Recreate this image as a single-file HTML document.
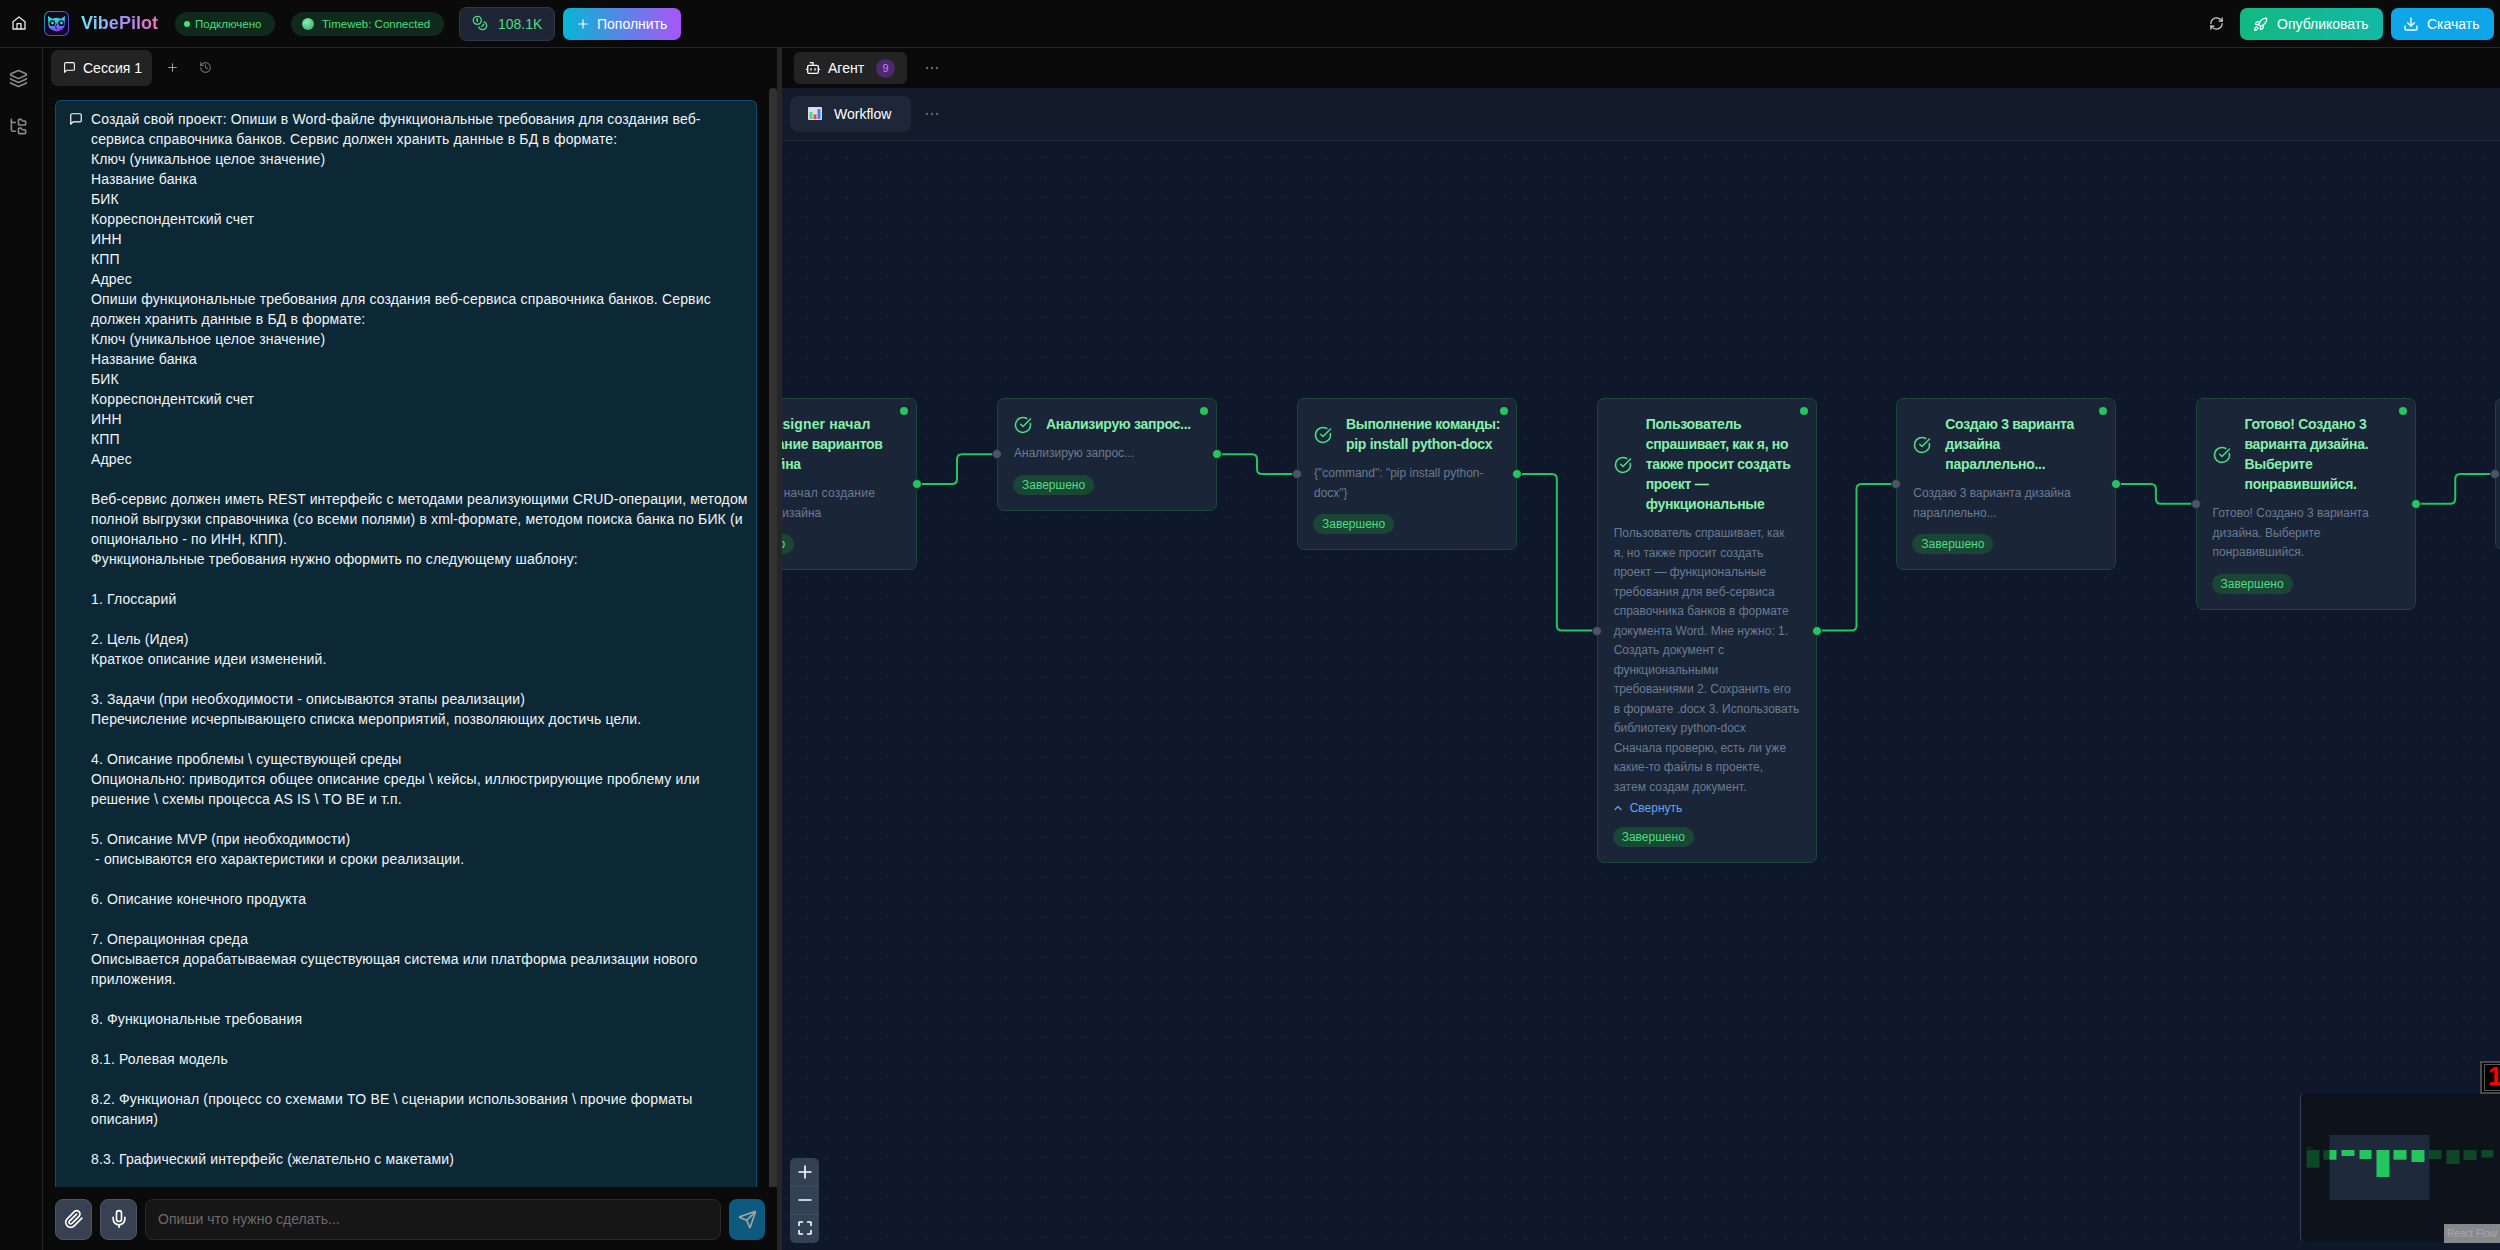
<!DOCTYPE html>
<html><head><meta charset="utf-8">
<style>
*{box-sizing:border-box;margin:0;padding:0}
html,body{width:2500px;height:1250px;overflow:hidden;background:#0a0a0a;font-family:"Liberation Sans",sans-serif;color:#e5e5e5}
.abs{position:absolute}
svg{display:block;overflow:visible}
#hdr{position:absolute;left:0;top:0;width:2500px;height:48px;background:#0a0a0a;border-bottom:1px solid #262626}
.pill{position:absolute;top:12px;height:24px;border-radius:12px;background:#0f2a1a;color:#4ade80;font-size:12px;line-height:24px;white-space:nowrap}
.txt{position:absolute;white-space:nowrap}
#side{position:absolute;left:0;top:48px;width:43px;height:1202px;border-right:1px solid #262626;background:#0a0a0a}
#chat{position:absolute;left:43px;top:48px;width:734px;height:1202px;background:#0a0a0a;overflow:hidden}
#divider{position:absolute;left:777px;top:48px;width:5px;height:1202px;background:#262626}
#right{position:absolute;left:782px;top:48px;width:1718px;height:1202px;background:#0a0a0a;overflow:hidden}
#wfhdr{position:absolute;left:0;top:40px;width:1718px;height:53px;background:#131a29;border-bottom:1px solid #1e293b}
#canvas{position:absolute;left:0;top:93px;width:1718px;height:1109px;background-color:#0f172a;overflow:hidden}
.msg{position:absolute;left:12px;top:52px;width:702px;height:1087px;background:#0c2835;border:1px solid #0f4c6c;border-bottom:none;border-radius:6px 6px 0 0;overflow:hidden}
.msgtxt{position:absolute;left:35px;top:8px;font-size:14px;line-height:20px;letter-spacing:0.15px;color:#f1f5f9;white-space:pre}
.ibtn{position:absolute;top:1151px;width:37px;height:41px;border-radius:8px;background:#374151;border:1px solid #4b5563}
</style></head>
<body>
<style>
.node{position:absolute;width:220px;border-radius:7px;border:1px solid #1a4638;background:rgba(30,41,59,0.78)}
.sdot{position:absolute;right:8px;top:8px;width:8px;height:8px;border-radius:4px;background:#22c55e}
.ntitle{position:absolute;left:48px;margin-top:-1px;font-size:14px;line-height:20px;font-weight:bold;letter-spacing:-0.3px;color:#86efac;white-space:nowrap}
.nsub{position:absolute;left:16px;margin-top:1px;font-size:12px;line-height:19.5px;color:#6b7b93;white-space:nowrap}
.ntog{position:absolute;left:32px;font-size:12px;line-height:16px;color:#60a5fa;white-space:nowrap}
.badge{position:absolute;left:15px;height:20px;padding:0 9px;border-radius:10px;background:#1a4636;color:#4ade80;font-size:12px;line-height:20px;white-space:nowrap}
.hdl{position:absolute;width:10px;height:10px;border-radius:5px;border:1px solid #1e293b}
.hdl.src{background:#22c55e}
.hdl.tgt{background:#4b5563}
</style>
<div id="hdr">
  <svg class="abs" style="left:11px;top:15px" width="16" height="16" viewBox="0 0 24 24" fill="none" stroke="#e5e5e5" stroke-width="2" stroke-linejoin="round" stroke-linecap="round"><path d="M3 10 12 3l9 7v11H3z"/><path d="M9 21v-8h6v8"/></svg>
  <div class="abs" style="left:44px;top:11px;width:25px;height:25px;border-radius:6px;background:linear-gradient(135deg,#1fa89a,#3b5fb0 55%,#7c3aed)"></div>
  <div class="abs" style="left:45px;top:12px;width:23px;height:23px;border-radius:5px;background:#110826"></div>
  <svg class="abs" style="left:47px;top:15px" width="19" height="19" viewBox="0 0 20 20">
    <defs><linearGradient id="owl" x1="0" y1="0" x2="0.3" y2="1"><stop offset="0" stop-color="#22f0c0"/><stop offset="0.5" stop-color="#38bdd8"/><stop offset="1" stop-color="#8b3cf7"/></linearGradient></defs>
    <path d="M1,1 L5.5,4 Q10,2 14.5,4 L19,1 L18.6,9 Q19,13 16,15 Q10,19.5 4,15 Q1,13 1.4,9 Z" fill="url(#owl)"/>
    <circle cx="5.6" cy="8.6" r="3.1" fill="#0b0620"/><circle cx="15" cy="8.6" r="3.1" fill="#0b0620"/>
    <circle cx="5.8" cy="8.4" r="1.5" fill="#3fd0d8"/><circle cx="15.2" cy="8.4" r="1.5" fill="#3fd0d8"/>
    <path d="M10.3,9 L9,13 L10.5,15" fill="none" stroke="#0b0620" stroke-width="0.9"/>
  </svg>
  <div class="txt" style="left:81px;top:11px;font-size:18px;font-weight:bold;letter-spacing:0.05px;line-height:24px;background:linear-gradient(90deg,#67e8f9,#a78bfa 55%,#f472b6);-webkit-background-clip:text;background-clip:text;color:transparent">VibePilot</div>
  <div class="pill" style="left:175px;width:100px"><span class="abs" style="left:9px;top:9px;width:6px;height:6px;border-radius:3px;background:#4ade80"></span><span class="abs" style="left:20px;font-size:11.5px">Подключено</span></div>
  <div class="pill" style="left:291px;width:153px"><span class="abs" style="left:11px;top:6px;width:12px;height:12px;border-radius:6px;background:radial-gradient(circle at 40% 35%,#86efac,#2f9e6a)"></span><span class="abs" style="left:31px;font-size:11.5px">Timeweb: Connected</span></div>
  <div class="abs" style="left:459px;top:7px;width:96px;height:34px;border-radius:7px;background:#1e2636;border:1px solid #2d3748"></div>
  <svg class="abs" style="left:472px;top:15px" width="16" height="16" viewBox="0 0 24 24" fill="none" stroke="#4ade80" stroke-width="2" stroke-linecap="round" stroke-linejoin="round"><circle cx="8" cy="8" r="6"/><path d="M18.09 10.37A6 6 0 1 1 10.34 18"/><path d="M7 6h1v4"/><path d="m16.71 13.88.7.71-2.82 2.82"/></svg>
  <div class="txt" style="left:498px;top:7px;line-height:34px;font-size:14px;color:#4ade80">108.1K</div>
  <div class="abs" style="left:563px;top:8px;width:118px;height:32px;border-radius:7px;background:linear-gradient(90deg,#06b6d4,#a855f7)"></div>
  <svg class="abs" style="left:576px;top:17px" width="14" height="14" viewBox="0 0 24 24" fill="none" stroke="#fff" stroke-width="2" stroke-linecap="round"><path d="M5 12h14M12 5v14"/></svg>
  <div class="txt" style="left:597px;top:8px;line-height:32px;font-size:14px;color:#fff">Пополнить</div>
  <svg class="abs" style="left:2209px;top:16px" width="15" height="15" viewBox="0 0 24 24" fill="none" stroke="#d4d4d4" stroke-width="2" stroke-linecap="round" stroke-linejoin="round"><path d="M3 12a9 9 0 0 1 9-9 9.75 9.75 0 0 1 6.74 2.74L21 8"/><path d="M21 3v5h-5"/><path d="M21 12a9 9 0 0 1-9 9 9.75 9.75 0 0 1-6.74-2.74L3 16"/><path d="M8 16H3v5"/></svg>
  <div class="abs" style="left:2240px;top:8px;width:143px;height:32px;border-radius:7px;background:linear-gradient(90deg,#10b981,#14b8a6)"></div>
  <svg class="abs" style="left:2253px;top:17px" width="15" height="15" viewBox="0 0 24 24" fill="none" stroke="#fff" stroke-width="2" stroke-linecap="round" stroke-linejoin="round"><path d="M4.5 16.5c-1.5 1.26-2 5-2 5s3.74-.5 5-2c.71-.84.7-2.13-.09-2.91a2.18 2.18 0 0 0-2.91-.09z"/><path d="m12 15-3-3a22 22 0 0 1 2-3.95A12.88 12.88 0 0 1 22 2c0 2.72-.78 7.5-6 11a22.35 22.35 0 0 1-4 2z"/><path d="M9 12H4s.55-3.03 2-4c1.62-1.08 5 0 5 0"/><path d="M12 15v5s3.03-.55 4-2c1.08-1.62 0-5 0-5"/></svg>
  <div class="txt" style="left:2277px;top:8px;line-height:32px;font-size:14px;color:#fff">Опубликовать</div>
  <div class="abs" style="left:2391px;top:8px;width:103px;height:32px;border-radius:7px;background:#0ea5e9"></div>
  <svg class="abs" style="left:2403px;top:16px" width="16" height="16" viewBox="0 0 24 24" fill="none" stroke="#fff" stroke-width="2" stroke-linecap="round" stroke-linejoin="round"><path d="M21 15v4a2 2 0 0 1-2 2H5a2 2 0 0 1-2-2v-4"/><path d="M7 10l5 5 5-5"/><path d="M12 15V3"/></svg>
  <div class="txt" style="left:2427px;top:8px;line-height:32px;font-size:14px;color:#fff">Скачать</div>
</div>
<div id="side">
  <svg class="abs" style="left:8.5px;top:20.5px" width="19" height="19" viewBox="0 0 24 24" fill="none" stroke="#8a8a8a" stroke-width="2" stroke-linecap="round" stroke-linejoin="round"><path d="M12.83 2.18a2 2 0 0 0-1.66 0L2.6 6.08a1 1 0 0 0 0 1.83l8.58 3.91a2 2 0 0 0 1.66 0l8.58-3.9a1 1 0 0 0 0-1.83z"/><path d="M2 12a1 1 0 0 0 .58.91l8.6 3.91a2 2 0 0 0 1.65 0l8.58-3.9A1 1 0 0 0 22 12"/><path d="M2 17a1 1 0 0 0 .58.91l8.6 3.91a2 2 0 0 0 1.65 0l8.58-3.9A1 1 0 0 0 22 17"/></svg>
  <svg class="abs" style="left:8.5px;top:68.5px" width="19" height="19" viewBox="0 0 24 24" fill="none" stroke="#8a8a8a" stroke-width="2" stroke-linecap="round" stroke-linejoin="round"><path d="M20 10a1 1 0 0 0 1-1V6a1 1 0 0 0-1-1h-2.5a1 1 0 0 1-.8-.4l-.9-1.2A1 1 0 0 0 15 3h-2a1 1 0 0 0-1 1v5a1 1 0 0 0 1 1Z"/><path d="M20 21a1 1 0 0 0 1-1v-3a1 1 0 0 0-1-1h-2.9a1 1 0 0 1-.88-.55l-.42-.85a1 1 0 0 0-.92-.6H13a1 1 0 0 0-1 1v5a1 1 0 0 0 1 1Z"/><path d="M3 5a2 2 0 0 0 2 2h3"/><path d="M3 3v13a2 2 0 0 0 2 2h3"/></svg>
</div>
<div id="chat">
  <div class="abs" style="left:8px;top:2px;width:101px;height:36px;border-radius:7px;background:#232323"></div>
  <svg class="abs" style="left:20px;top:13px" width="13" height="13" viewBox="0 0 24 24" fill="none" stroke="#fff" stroke-width="2" stroke-linecap="round" stroke-linejoin="round"><path d="M21 15a2 2 0 0 1-2 2H7l-4 4V5a2 2 0 0 1 2-2h14a2 2 0 0 1 2 2z"/></svg>
  <div class="txt" style="left:40px;top:2px;line-height:36px;font-size:14px;color:#fff">Сессия 1</div>
  <svg class="abs" style="left:123px;top:13px" width="13" height="13" viewBox="0 0 24 24" fill="none" stroke="#a3a3a3" stroke-width="1.8" stroke-linecap="round"><path d="M5 12h14M12 5v14"/></svg>
  <svg class="abs" style="left:156px;top:13px" width="13" height="13" viewBox="0 0 24 24" fill="none" stroke="#6b6b6b" stroke-width="2" stroke-linecap="round" stroke-linejoin="round"><path d="M3 12a9 9 0 1 0 9-9 9.75 9.75 0 0 0-6.74 2.74L3 8"/><path d="M3 3v5h5"/><path d="M12 7v5l4 2"/></svg>
  <div class="msg">
    <svg class="abs" style="left:13px;top:11px" width="14" height="14" viewBox="0 0 24 24" fill="none" stroke="#fff" stroke-width="2" stroke-linecap="round" stroke-linejoin="round"><path d="M21 15a2 2 0 0 1-2 2H7l-4 4V5a2 2 0 0 1 2-2h14a2 2 0 0 1 2 2z"/></svg>
    <div class="msgtxt">Создай свой проект: Опиши в Word-файле функциональные требования для создания веб-
сервиса справочника банков. Сервис должен хранить данные в БД в формате:
Ключ (уникальное целое значение)
Название банка
БИК
Корреспондентский счет
ИНН
КПП
Адрес
Опиши функциональные требования для создания веб-сервиса справочника банков. Сервис
должен хранить данные в БД в формате:
Ключ (уникальное целое значение)
Название банка
БИК
Корреспондентский счет
ИНН
КПП
Адрес

Веб-сервис должен иметь REST интерфейс с методами реализующими CRUD-операции, методом
полной выгрузки справочника (со всеми полями) в xml-формате, методом поиска банка по БИК (и
опционально - по ИНН, КПП).
Функциональные требования нужно оформить по следующему шаблону:

1. Глоссарий

2. Цель (Идея)
Краткое описание идеи изменений.

3. Задачи (при необходимости - описываются этапы реализации)
Перечисление исчерпывающего списка мероприятий, позволяющих достичь цели.

4. Описание проблемы \ существующей среды
Опционально: приводится общее описание среды \ кейсы, иллюстрирующие проблему или
решение \ схемы процесса AS IS \ TO BE и т.п.

5. Описание MVP (при необходимости)
 - описываются его характеристики и сроки реализации.

6. Описание конечного продукта

7. Операционная среда
Описывается дорабатываемая существующая система или платформа реализации нового
приложения.

8. Функциональные требования

8.1. Ролевая модель

8.2. Функционал (процесс со схемами TO BE \ сценарии использования \ прочие форматы
описания)

8.3. Графический интерфейс (желательно с макетами)</div>
  </div>
  <div class="abs" style="left:726px;top:40px;width:8px;height:1099px;background:#323232;border-radius:4px 4px 0 0"></div>
  <div class="ibtn" style="left:12px"></div>
  <svg class="abs" style="left:21px;top:1161px" width="20" height="20" viewBox="0 0 24 24" fill="none" stroke="#fff" stroke-width="2" stroke-linecap="round" stroke-linejoin="round"><path d="m21.44 11.05-9.19 9.19a6 6 0 0 1-8.49-8.49l8.57-8.57A4 4 0 1 1 18 8.84l-8.59 8.57a2 2 0 0 1-2.83-2.83l8.49-8.48"/></svg>
  <div class="ibtn" style="left:57px"></div>
  <svg class="abs" style="left:66px;top:1161px" width="20" height="20" viewBox="0 0 24 24" fill="none" stroke="#fff" stroke-width="2" stroke-linecap="round" stroke-linejoin="round"><path d="M12 2a3 3 0 0 0-3 3v7a3 3 0 0 0 6 0V5a3 3 0 0 0-3-3Z"/><path d="M19 10v2a7 7 0 0 1-14 0v-2"/><path d="M12 19v3"/></svg>
  <div class="abs" style="left:102px;top:1151px;width:576px;height:41px;border-radius:8px;background:#161616;border:1px solid #2a2a2a"></div>
  <div class="txt" style="left:115px;top:1151px;line-height:41px;font-size:14px;color:#6b6b6b">Опиши что нужно сделать...</div>
  <div class="abs" style="left:686px;top:1151px;width:36px;height:41px;border-radius:8px;background:#0d5a7e"></div>
  <svg class="abs" style="left:695px;top:1162px" width="19" height="19" viewBox="0 0 24 24" fill="none" stroke="#aaa49c" stroke-width="2" stroke-linecap="round" stroke-linejoin="round"><path d="M14.536 21.686a.5.5 0 0 0 .937-.024l6.5-19a.496.496 0 0 0-.635-.635l-19 6.5a.5.5 0 0 0-.024.937l7.93 3.18a2 2 0 0 1 1.112 1.11z"/><path d="m21.854 2.147-10.94 10.939"/></svg>
</div>
<div id="divider"></div>
<div id="right">
  <div class="abs" style="left:12px;top:4px;width:113px;height:32px;border-radius:6px;background:#232323"></div>
  <svg class="abs" style="left:23px;top:11.5px" width="16" height="16" viewBox="0 0 24 24" fill="none" stroke="#fff" stroke-width="2" stroke-linecap="round" stroke-linejoin="round"><path d="M12 8V4H8"/><rect width="16" height="12" x="4" y="8" rx="2"/><path d="M2 14h2"/><path d="M20 14h2"/><path d="M15 13v2"/><path d="M9 13v2"/></svg>
  <div class="txt" style="left:46px;top:4px;line-height:32px;font-size:14px;color:#fff">Агент</div>
  <div class="abs" style="left:94px;top:10.5px;width:19px;height:19px;border-radius:10px;background:#4c2a6e;color:#c084fc;font-size:11px;line-height:19px;text-align:center">9</div>
  <svg class="abs" style="left:143px;top:18px" width="14" height="4" viewBox="0 0 14 4"><circle cx="2" cy="2" r="1.15" fill="#6f6f6f"/><circle cx="7" cy="2" r="1.15" fill="#6f6f6f"/><circle cx="12" cy="2" r="1.15" fill="#6f6f6f"/></svg>
  <div id="wfhdr">
    <div class="abs" style="left:8px;top:8px;width:121px;height:36px;border-radius:8px;background:#1e2737"></div>
    <svg class="abs" style="left:26px;top:19px" width="14" height="13" viewBox="0 0 14 13"><rect width="14" height="13" rx="1" fill="#e2dcea"/><rect x="1.5" y="5" width="3" height="7" fill="#4ade80"/><rect x="5.5" y="7.5" width="3" height="4.5" fill="#f43f5e"/><rect x="9.5" y="2" width="3" height="10" fill="#3b82f6"/></svg>
    <div class="txt" style="left:52px;top:8px;line-height:36px;font-size:14px;color:#fff">Workflow</div>
    <svg class="abs" style="left:143px;top:24px" width="14" height="4" viewBox="0 0 14 4"><circle cx="2" cy="2" r="1.15" fill="#646a74"/><circle cx="7" cy="2" r="1.15" fill="#646a74"/><circle cx="12" cy="2" r="1.15" fill="#646a74"/></svg>
  </div>
  <div id="canvas">
    <svg class="abs" style="left:0;top:0" width="1718" height="1109"><defs><pattern id="dots" x="-5.5" y="6.5" width="19.975" height="20" patternUnits="userSpaceOnUse"><circle cx="10" cy="10" r="0.9" fill="#1f2839"/></pattern></defs><rect width="1718" height="1109" fill="url(#dots)"/></svg>
    <svg class="abs" style="left:0;top:0" width="1718" height="1109" fill="none" stroke="#22c55e" stroke-width="2"><path d="M135,343.0 L170.0,343.0 Q175.0,343.0 175.0,338.0 L175.0,318.25 Q175.0,313.25 180.0,313.25 L215,313.25"/><path d="M435,313.25 L470.0,313.25 Q475.0,313.25 475.0,318.25 L475.0,328.0 Q475.0,333.0 480.0,333.0 L515,333.0"/><path d="M735,333.0 L769.85,333.0 Q774.85,333.0 774.85,338.0 L774.85,484.5 Q774.85,489.5 779.85,489.5 L814.7,489.5"/><path d="M1034.7,489.5 L1069.5,489.5 Q1074.5,489.5 1074.5,484.5 L1074.5,348.0 Q1074.5,343.0 1079.5,343.0 L1114.3,343.0"/><path d="M1334.3000000000002,343.0 L1368.9,343.0 Q1373.9,343.0 1373.9,348.0 L1373.9,357.75 Q1373.9,362.75 1378.9,362.75 L1413.5,362.75"/><path d="M1633.5,362.75 L1668.25,362.75 Q1673.25,362.75 1673.25,357.75 L1673.25,338.0 Q1673.25,333.0 1678.25,333.0 L1713,333.0"/></svg>
    <div class="node" style="left:-85px;top:257px;height:172.0px"><span class="sdot"></span><svg class="abs" style="left:16px;top:37.0px" width="18" height="18" viewBox="0 0 24 24" fill="none" stroke="#4ade80" stroke-width="2" stroke-linecap="round" stroke-linejoin="round"><path d="M21.801 10A10 10 0 1 1 17 3.335"/><path d="m9 11 3 3L22 4"/></svg><div class="ntitle" style="top:16px"><span style="letter-spacing:0.12px">UI Designer начал</span><br>создание вариантов<br>дизайна</div><div class="nsub" style="top:84px"><span style="letter-spacing:0.25px">UI Designer начал создание</span><br>вариантов дизайна</div><div class="badge" style="top:135.0px">Завершено</div></div><div class="node" style="left:215px;top:257px;height:112.5px"><span class="sdot"></span><svg class="abs" style="left:16px;top:17.0px" width="18" height="18" viewBox="0 0 24 24" fill="none" stroke="#4ade80" stroke-width="2" stroke-linecap="round" stroke-linejoin="round"><path d="M21.801 10A10 10 0 1 1 17 3.335"/><path d="m9 11 3 3L22 4"/></svg><div class="ntitle" style="top:16px">Анализирую запрос...</div><div class="nsub" style="top:44px">Анализирую запрос...</div><div class="badge" style="top:75.5px">Завершено</div></div><div class="node" style="left:515px;top:257px;height:152.0px"><span class="sdot"></span><svg class="abs" style="left:16px;top:27.0px" width="18" height="18" viewBox="0 0 24 24" fill="none" stroke="#4ade80" stroke-width="2" stroke-linecap="round" stroke-linejoin="round"><path d="M21.801 10A10 10 0 1 1 17 3.335"/><path d="m9 11 3 3L22 4"/></svg><div class="ntitle" style="top:16px">Выполнение команды:<br>pip install python-docx</div><div class="nsub" style="top:64px">{"command": "pip install python-<br>docx"}</div><div class="badge" style="top:115.0px">Завершено</div></div><div class="node" style="left:814.7px;top:257px;height:465.0px"><span class="sdot"></span><svg class="abs" style="left:16px;top:57.0px" width="18" height="18" viewBox="0 0 24 24" fill="none" stroke="#4ade80" stroke-width="2" stroke-linecap="round" stroke-linejoin="round"><path d="M21.801 10A10 10 0 1 1 17 3.335"/><path d="m9 11 3 3L22 4"/></svg><div class="ntitle" style="top:16px">Пользователь<br>спрашивает, как я, но<br>также просит создать<br>проект —<br>функциональные</div><div class="nsub" style="top:124px">Пользователь спрашивает, как<br>я, но также просит создать<br>проект — функциональные<br>требования для веб-сервиса<br>справочника банков в формате<br>документа Word. Мне нужно: 1.<br>Создать документ с<br>функциональными<br>требованиями 2. Сохранить его<br>в формате .docx 3. Использовать<br>библиотеку python-docx<br>Сначала проверю, есть ли уже<br>какие-то файлы в проекте,<br>затем создам документ.</div><svg class="abs" style="left:14px;top:403.0px" width="12" height="12" viewBox="0 0 24 24" fill="none" stroke="#60a5fa" stroke-width="2.4" stroke-linecap="round" stroke-linejoin="round"><path d="m18 15-6-6-6 6"/></svg><div class="ntog" style="top:401.0px">Свернуть</div><div class="badge" style="top:428.0px">Завершено</div></div><div class="node" style="left:1114.3px;top:257px;height:172.0px"><span class="sdot"></span><svg class="abs" style="left:16px;top:37.0px" width="18" height="18" viewBox="0 0 24 24" fill="none" stroke="#4ade80" stroke-width="2" stroke-linecap="round" stroke-linejoin="round"><path d="M21.801 10A10 10 0 1 1 17 3.335"/><path d="m9 11 3 3L22 4"/></svg><div class="ntitle" style="top:16px">Создаю 3 варианта<br>дизайна<br>параллельно...</div><div class="nsub" style="top:84px">Создаю 3 варианта дизайна<br>параллельно...</div><div class="badge" style="top:135.0px">Завершено</div></div><div class="node" style="left:1413.5px;top:257px;height:211.5px"><span class="sdot"></span><svg class="abs" style="left:16px;top:47.0px" width="18" height="18" viewBox="0 0 24 24" fill="none" stroke="#4ade80" stroke-width="2" stroke-linecap="round" stroke-linejoin="round"><path d="M21.801 10A10 10 0 1 1 17 3.335"/><path d="m9 11 3 3L22 4"/></svg><div class="ntitle" style="top:16px">Готово! Создано 3<br>варианта дизайна.<br>Выберите<br>понравившийся.</div><div class="nsub" style="top:104px">Готово! Создано 3 варианта<br>дизайна. Выберите<br>понравившийся.</div><div class="badge" style="top:174.5px">Завершено</div></div><div class="node" style="left:1713px;top:257px;height:152.0px"><span class="sdot"></span><svg class="abs" style="left:16px;top:27.0px" width="18" height="18" viewBox="0 0 24 24" fill="none" stroke="#4ade80" stroke-width="2" stroke-linecap="round" stroke-linejoin="round"><path d="M21.801 10A10 10 0 1 1 17 3.335"/><path d="m9 11 3 3L22 4"/></svg><div class="ntitle" style="top:16px">Выполнение<br>команды</div><div class="nsub" style="top:64px">...<br>...</div><div class="badge" style="top:115.0px">Завершено</div></div>
    <span class="hdl tgt" style="left:-90px;top:338.0px"></span><span class="hdl src" style="left:130px;top:338.0px"></span><span class="hdl tgt" style="left:210px;top:308.25px"></span><span class="hdl src" style="left:430px;top:308.25px"></span><span class="hdl tgt" style="left:510px;top:328.0px"></span><span class="hdl src" style="left:730px;top:328.0px"></span><span class="hdl tgt" style="left:809.7px;top:484.5px"></span><span class="hdl src" style="left:1029.7px;top:484.5px"></span><span class="hdl tgt" style="left:1109.3px;top:338.0px"></span><span class="hdl src" style="left:1329.3000000000002px;top:338.0px"></span><span class="hdl tgt" style="left:1408.5px;top:357.75px"></span><span class="hdl src" style="left:1628.5px;top:357.75px"></span><span class="hdl tgt" style="left:1708px;top:328.0px"></span><span class="hdl src" style="left:1928px;top:328.0px"></span>
    <div class="abs" style="left:8px;top:1017px;width:29px;height:85px;border-radius:5px;background:#334155;overflow:hidden"><div class="abs" style="left:0;top:28px;width:29px;height:1px;background:#3e4c60"></div><div class="abs" style="left:0;top:56px;width:29px;height:1px;background:#3e4c60"></div><svg class="abs" style="left:7.5px;top:7px" width="14" height="14" viewBox="0 0 14 14" fill="none" stroke="#fff" stroke-width="1.6"><path d="M0.5 7h13M7 0.5v13"/></svg><svg class="abs" style="left:7.5px;top:35px" width="14" height="14" viewBox="0 0 14 14" fill="none" stroke="#fff" stroke-width="1.6"><path d="M0.5 7h13"/></svg><svg class="abs" style="left:7.5px;top:63px" width="14" height="14" viewBox="0 0 14 14" fill="none" stroke="#fff" stroke-width="1.6" stroke-linecap="round"><path d="M1 4.5V1.5Q1 1 1.5 1H4.5M9.5 1H12.5Q13 1 13 1.5V4.5M13 9.5V12.5Q13 13 12.5 13H9.5M4.5 13H1.5Q1 13 1 12.5V9.5"/></svg></div>
    <div class="abs" style="left:1517.5px;top:951px;width:206.5px;height:150.5px;border-radius:6px;border:1px solid #0f172a;border-left-color:#34445a;background:#1e293b;overflow:hidden"><svg class="abs" style="left:-1px;top:-1px" width="200.5" height="150.5"><rect x="6.5" y="58" width="13" height="17.6" fill="#22c55e"/><rect x="23.5" y="58" width="13" height="9.7" fill="#22c55e"/><rect x="41.5" y="58" width="13" height="6" fill="#22c55e"/><rect x="59.5" y="58" width="12" height="9" fill="#22c55e"/><rect x="76.5" y="58" width="13" height="27" fill="#22c55e"/><rect x="93.5" y="58" width="13" height="9.7" fill="#22c55e"/><rect x="111.5" y="58" width="13" height="12" fill="#22c55e"/><rect x="129.5" y="58" width="12" height="9" fill="#22c55e"/><rect x="146.5" y="58" width="13" height="14" fill="#22c55e"/><rect x="163.5" y="58" width="13" height="10" fill="#22c55e"/><rect x="181.5" y="58" width="12" height="7.6" fill="#22c55e"/><rect x="6.5" y="55" width="6" height="2" fill="#475569"/><path fill="rgba(4,6,11,0.66)" fill-rule="evenodd" d="M0,0 H200.5 V150.5 H0 Z M29.5,43 H129.5 V108 H29.5 Z"/></svg></div>
    <div class="abs" style="left:1698px;top:920px;width:30px;height:32.5px;background:#000;border:2px solid #4a4a4a"></div>
    <div class="abs" style="left:1701.5px;top:922.5px;width:30px;height:27px;background:#000;border:1.5px solid #5a5a5a"></div>
    <div class="txt" style="left:1706px;top:920px;font-size:26px;line-height:30px;font-weight:bold;color:#ff0000">1</div>
    
    <div class="abs" style="left:1662px;top:1083px;width:70px;height:19px;background:#88898d;color:#a8a8a8;font-size:10px;line-height:19px;padding-left:3px">React Flow</div>
  </div>
</div>
</body></html>
